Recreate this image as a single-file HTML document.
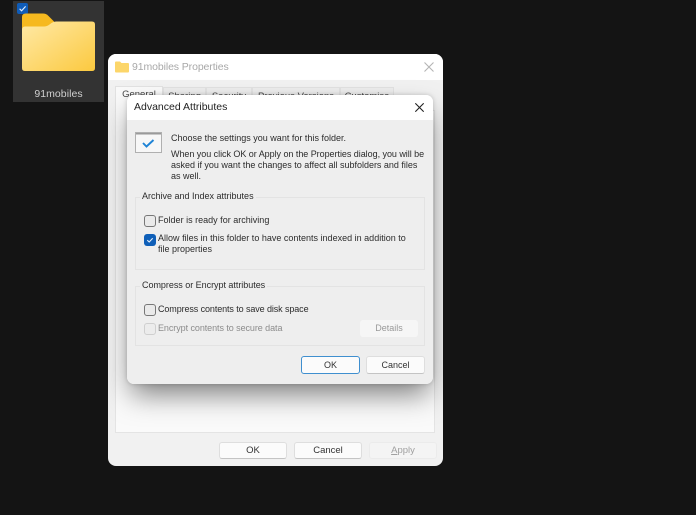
<!DOCTYPE html>
<html><head><meta charset="utf-8"><style>
html,body{margin:0;padding:0;width:696px;height:515px;overflow:hidden;background:#141414;}
body{position:relative;font-family:"Liberation Sans",sans-serif;filter:blur(.35px);}
.a{position:absolute;white-space:nowrap;}
.t{position:absolute;white-space:nowrap;font-size:9px;line-height:11px;color:#2c2c2c;}
.btn{position:absolute;box-sizing:border-box;background:#fbfbfb;border:1px solid #dedede;border-bottom-color:#c4c4c4;border-radius:3px;text-align:center;font-size:9.5px;color:#333;}
.cb{position:absolute;box-sizing:border-box;width:12px;height:12px;border-radius:3px;border:1px solid #777;background:#eaeaea;}
.grp{position:absolute;box-sizing:border-box;border:1px solid #e3e3e3;}
.leg{position:absolute;background:#eeeeee;padding:0 2px 0 2px;font-size:9px;line-height:11px;color:#2c2c2c;white-space:nowrap;}
.tab{position:absolute;top:87px;height:23px;box-sizing:border-box;border:1px solid #e2e2e2;border-bottom:0;background:#ededed;font-size:9.5px;line-height:11px;color:#444;padding:3px 0 0 0;text-align:center;}
</style></head><body>

<div class="a" style="left:13px;top:1px;width:91px;height:101px;background:#333333;"></div>
<svg class="a" style="left:17px;top:3px" width="80" height="70" viewBox="0 0 80 70">
<defs><linearGradient id="g" x1="0" y1="0" x2="1" y2="1"><stop offset="0" stop-color="#ffe9a6"/><stop offset="1" stop-color="#fbc93f"/></linearGradient></defs>
<rect x="0" y="0" width="11" height="11" rx="2" fill="#0f5cb8"/>
<path d="M2.600 5.800 L4.600 7.800 L8.600 3.400" stroke="#dfeeff" stroke-width="1.100" fill="none"/>
<path d="M5 14 Q5 10.500 9 10.500 L26 10.500 Q29 10.500 31 12.500 L37 18.500 L37 30 L5 30 Z" fill="#f6b91f"/>
<path d="M5 27 Q5 23.500 8 23.500 L27 23.500 Q30 23.500 32.500 21.500 L34.500 20 Q36.500 18.500 39 18.500 L75 18.500 Q78 18.500 78 21.500 L78 65 Q78 68 75 68 L8 68 Q5 68 5 65 Z" fill="url(#g)"/>
</svg>
<div class="a" style="left:13px;top:88px;width:91px;text-align:center;font-size:10.500px;line-height:13px;color:#cfcfcf;letter-spacing:.05px;">91mobiles</div>

<!-- properties dialog -->
<div class="a" style="left:108px;top:54px;width:335px;height:412px;background:#f1f1f1;border-radius:8px;overflow:hidden;">
  <div class="a" style="left:0;top:0;width:335px;height:26px;background:#fff;"></div>
</div>
<svg class="a" style="left:115px;top:61px" width="14" height="12" viewBox="0 0 14 12"><path d="M0 1.500 Q0 .5 1 .5 L5 .5 L6.500 2 L13 2 Q14 2 14 3 L14 10.500 Q14 11.500 13 11.500 L1 11.500 Q0 11.500 0 10.500 Z" fill="#fcd66a"/></svg>
<div class="a" style="left:132px;top:61px;font-size:10.500px;line-height:13px;color:#a8a8a8;letter-spacing:-.1px;">91mobiles Properties</div>
<svg class="a" style="left:424px;top:62px" width="10" height="10" viewBox="0 0 10 10"><path d="M.5 .5 L9.500 9.500 M9.500 .5 L.5 9.500" stroke="#b4b4b4" stroke-width="1.100"/></svg>

<div class="a" style="left:115px;top:110px;width:320px;height:323px;background:#fafafa;border:1px solid #e4e4e4;box-sizing:border-box;"></div>
<div class="tab" style="left:163px;width:43px;">Sharing</div>
<div class="tab" style="left:206px;width:46px;">Security</div>
<div class="tab" style="left:252px;width:88px;">Previous Versions</div>
<div class="tab" style="left:340px;width:54px;">Customise</div>
<div class="tab" style="left:115px;width:48px;top:86px;height:26px;background:#fafafa;padding-top:2px;">General</div>

<div class="btn" style="left:219px;top:442px;width:68px;height:17px;line-height:15px;">OK</div>
<div class="btn" style="left:294px;top:442px;width:68px;height:17px;line-height:15px;">Cancel</div>
<div class="btn" style="left:369px;top:442px;width:68px;height:17px;line-height:15px;background:#f4f4f4;border-color:#ebebeb;color:#a0a0a0;"><u>A</u>pply</div>

<div class="a" style="left:108px;top:54px;width:335px;height:412px;border-radius:8px;overflow:hidden;pointer-events:none;">
  <div class="a" style="left:19px;top:41px;width:306px;height:289px;border-radius:7px;box-shadow:0 14px 28px -4px rgba(0,0,0,.5),0 0 5px rgba(0,0,0,.18);"></div>
</div>

<!-- advanced dialog -->
<div class="a" style="left:127px;top:95px;width:306px;height:289px;background:#eeeeee;border-radius:7px;overflow:hidden;">
  <div class="a" style="left:0;top:0;width:306px;height:25px;background:#fff;"></div>
</div>
<div class="a" style="left:134px;top:101px;font-size:10.500px;line-height:13px;color:#222;">Advanced Attributes</div>
<svg class="a" style="left:415px;top:103px" width="9" height="9" viewBox="0 0 9 9"><path d="M.3 .3 L8.700 8.700 M8.700 .3 L.3 8.700" stroke="#222" stroke-width="1.100"/></svg>

<svg class="a" style="left:135px;top:132px" width="27" height="21" viewBox="0 0 27 21"><rect x=".5" y=".5" width="26" height="20" fill="#f7f7f7" stroke="#b0b0b0"/><rect x="1" y="1" width="25" height="1.500" fill="#9a9a9a"/><path d="M8 11 L11.500 14.500 L18.500 8" stroke="#1f84d6" stroke-width="1.900" fill="none"/></svg>

<div class="t" style="left:171px;top:133px;letter-spacing:.01px;">Choose the settings you want for this folder.</div>
<div class="t" style="left:171px;top:149px;letter-spacing:-.04px;">When you click OK or Apply on the Properties dialog, you will be</div>
<div class="t" style="left:171px;top:160px;letter-spacing:-.01px;">asked if you want the changes to affect all subfolders and files</div>
<div class="t" style="left:171px;top:171px;">as well.</div>

<div class="grp" style="left:135px;top:197px;width:290px;height:73px;"></div>
<div class="leg" style="left:140px;top:191px;">Archive and Index attributes</div>
<div class="cb" style="left:144px;top:215px;"></div>
<div class="t" style="left:158px;top:215px;letter-spacing:.01px;">Folder is ready for archiving</div>
<svg class="a" style="left:144px;top:234px" width="12" height="12" viewBox="0 0 12 12"><rect width="12" height="12" rx="3" fill="#0f5fb8"/><path d="M3.300 6.200 L5.200 8 L8.700 4.200" stroke="#e6f0fb" stroke-width="1.100" fill="none"/></svg>
<div class="t" style="left:158px;top:233px;letter-spacing:.01px;">Allow files in this folder to have contents indexed in addition to</div>
<div class="t" style="left:158px;top:244px;">file properties</div>

<div class="grp" style="left:135px;top:286px;width:290px;height:60px;"></div>
<div class="leg" style="left:140px;top:280px;letter-spacing:-.03px;">Compress or Encrypt attributes</div>
<div class="cb" style="left:144px;top:304px;"></div>
<div class="t" style="left:158px;top:304px;letter-spacing:-.1px;">Compress contents to save disk space</div>
<div class="cb" style="left:144px;top:323px;border-color:#cfcfcf;background:#ececec;"></div>
<div class="t" style="left:158px;top:323px;color:#8c8c8c;letter-spacing:-.07px;">Encrypt contents to secure data</div>
<div class="a" style="left:360px;top:320px;width:58px;height:17px;background:#f6f6f6;border-radius:3px;text-align:center;font-size:9px;line-height:17px;color:#999;">Details</div>

<div class="btn" style="left:301px;top:356px;width:59px;height:18px;line-height:17px;border:1px solid #3f8fcf;font-size:9px;">OK</div>
<div class="btn" style="left:366px;top:356px;width:59px;height:18px;line-height:17px;font-size:9px;">Cancel</div>
</body></html>
